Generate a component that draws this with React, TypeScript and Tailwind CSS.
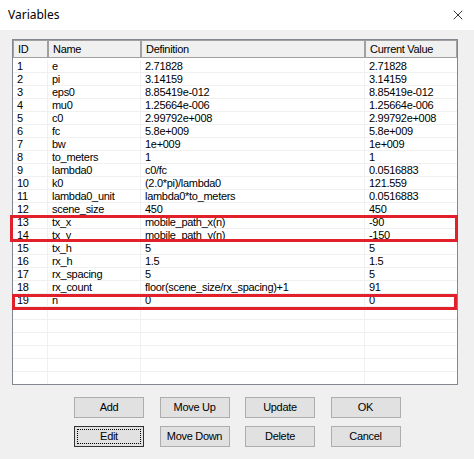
import { X } from "lucide-react";

const vars = [
  ["1", "e", "2.71828", "2.71828"],
  ["2", "pi", "3.14159", "3.14159"],
  ["3", "eps0", "8.85419e-012", "8.85419e-012"],
  ["4", "mu0", "1.25664e-006", "1.25664e-006"],
  ["5", "c0", "2.99792e+008", "2.99792e+008"],
  ["6", "fc", "5.8e+009", "5.8e+009"],
  ["7", "bw", "1e+009", "1e+009"],
  ["8", "to_meters", "1", "1"],
  ["9", "lambda0", "c0/fc", "0.0516883"],
  ["10", "k0", "(2.0*pi)/lambda0", "121.559"],
  ["11", "lambda0_unit", "lambda0*to_meters", "0.0516883"],
  ["12", "scene_size", "450", "450"],
  ["13", "tx_x", "mobile_path_x(n)", "-90"],
  ["14", "tx_y", "mobile_path_y(n)", "-150"],
  ["15", "tx_h", "5", "5"],
  ["16", "rx_h", "1.5", "1.5"],
  ["17", "rx_spacing", "5", "5"],
  ["18", "rx_count", "floor(scene_size/rx_spacing)+1", "91"],
  ["19", "n", "0", "0"],
];

const emptyRows = Array.from({ length: 7 }, () => ["", "", "", ""]);

const headers = ["ID", "Name", "Definition", "Current Value"];

const cols = "grid grid-cols-[35px_93px_224px_92px]";

const Button = ({ label, focused }: { label: string; focused?: boolean }) => (
  <div
    className={`relative flex h-[21px] w-[70px] items-center justify-center bg-[#e1e1e1] text-black ${
      focused ? "border border-[#333333]" : "border border-[#adadad]"
    }`}
  >
    {focused && <div className="absolute inset-[2px] border border-dotted border-black" />}
    <span className="relative">{label}</span>
  </div>
);

export default function App() {
  return (
    <div
      className="relative flex h-[459px] w-[474px] flex-col overflow-hidden bg-[#f0f0f0] text-[11px] tracking-[-0.3px] text-black"
      style={{ fontFamily: "Tahoma, 'Liberation Sans', sans-serif" }}
    >
      {/* title bar */}
      <div className="flex h-[30px] items-center justify-between bg-white pl-[8px] pr-[8px] tracking-normal">
        <span className="text-[12px]" style={{ fontFamily: "'Noto Sans', sans-serif" }}>
          Variables
        </span>
        <X className="h-[16px] w-[16px]" strokeWidth={1.2} />
      </div>

      {/* list */}
      <div className="ml-[12px] mt-[9px] h-[346px] w-[446px] overflow-hidden border border-[#828790] bg-white">
        <div className={`${cols} h-[18px]`}>
          {headers.map((h) => (
            <div
              key={h}
              className="flex items-center border border-[#a0a0a0] bg-[#f0f0f0] pl-[4px] leading-none"
            >
              {h}
            </div>
          ))}
        </div>
        <div className="pt-[2px]">
          {[...vars, ...emptyRows].map((row, i) => (
            <div key={i} className={`${cols} h-[13px]`}>
              {row.map((c, j) => (
                <div
                  key={j}
                  className={`flex items-center border-b border-[#f0f0f0] pl-[4px] leading-none ${
                    j < 3 ? "border-r" : ""
                  }`}
                >
                  {c}
                </div>
              ))}
            </div>
          ))}
        </div>
      </div>

      {/* buttons */}
      <div className="ml-[74px] mt-[12px] grid w-[326px] grid-cols-4 gap-x-[16px] gap-y-[8px]">
        <Button label="Add" />
        <Button label="Move Up" />
        <Button label="Update" />
        <Button label="OK" />
        <Button label="Edit" focused />
        <Button label="Move Down" />
        <Button label="Delete" />
        <Button label="Cancel" />
      </div>

      {/* red highlight boxes */}
      <div className="absolute left-[10px] top-[215px] h-[27px] w-[448px] border-[3px] border-[#e2202c]" />
      <div className="absolute left-[12px] top-[294px] h-[16px] w-[445px] border-[3px] border-[#e2202c]" />
    </div>
  );
}
